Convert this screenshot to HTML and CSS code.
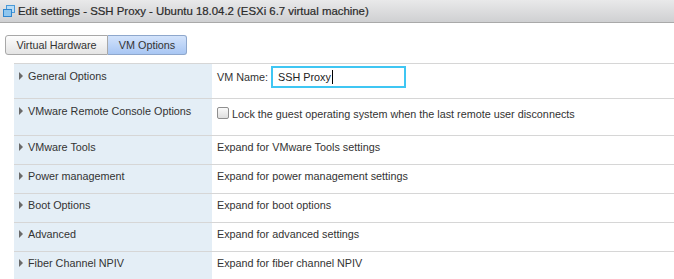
FILE: index.html
```html
<!DOCTYPE html>
<html>
<head>
<meta charset="utf-8">
<link rel="stylesheet" href="styles.css">
</head>
<body>
<div class="titlebar">
  <svg class="ticon" width="14" height="14" viewBox="0 0 14 14">
    <rect x="4.5" y="1.5" width="8" height="7" fill="#b9dcf5" stroke="#4a9ad8"/>
    <rect x="1.5" y="5.5" width="8" height="7" fill="#8fc6ee" stroke="#2f86cf"/>
  </svg>
  <span class="ttext">Edit settings - SSH Proxy - Ubuntu 18.04.2 (ESXi 6.7 virtual machine)</span>
</div>
<div class="tabs">
  <div class="tab">Virtual Hardware</div>
  <div class="tab active">VM Options</div>
</div>
<div class="table">
  <div class="row r-tall">
    <div class="lab"><span class="tri"></span>General Options</div>
    <div class="val">VM Name: <span class="input">SSH Proxy<span class="caret"></span></span></div>
  </div>
  <div class="row r-tall2">
    <div class="lab"><span class="tri"></span>VMware Remote Console Options</div>
    <div class="val chk"><span class="cb"></span>Lock the guest operating system when the last remote user disconnects</div>
  </div>
  <div class="row">
    <div class="lab"><span class="tri"></span>VMware Tools</div>
    <div class="val">Expand for VMware Tools settings</div>
  </div>
  <div class="row">
    <div class="lab"><span class="tri"></span>Power management</div>
    <div class="val">Expand for power management settings</div>
  </div>
  <div class="row">
    <div class="lab"><span class="tri"></span>Boot Options</div>
    <div class="val">Expand for boot options</div>
  </div>
  <div class="row">
    <div class="lab"><span class="tri"></span>Advanced</div>
    <div class="val">Expand for advanced settings</div>
  </div>
  <div class="row">
    <div class="lab"><span class="tri"></span>Fiber Channel NPIV</div>
    <div class="val">Expand for fiber channel NPIV</div>
  </div>
</div>
</body>
</html>
```
FILE: styles.css
```css
* { box-sizing: border-box; }
html, body { margin: 0; padding: 0; background: #fff; overflow: hidden; }
body { font-family: "Liberation Sans", Arial, sans-serif; color: #333; width: 674px; height: 279px; }

.titlebar {
  height: 23px;
  display: flex;
  align-items: center;
  padding-left: 2px;
  background: linear-gradient(#e9e9ea, #cfd0d2);
  border-bottom: 1px solid #a9a9a9;
}
.ticon { margin-right: 2px; }
.ttext { font-size: 11.4px; color: #2a2a2a; -webkit-text-stroke: 0.2px #2a2a2a; }

.tabs {
  display: flex;
  margin: 12px 0 0 5px;
  height: 20px;
}
.tab {
  font-size: 10.8px;
  line-height: 18px;
  border: 1px solid #a8a8a8;
  background: linear-gradient(#fdfdfd, #e4e4e4);
  color: #333;
  white-space: nowrap;
  text-align: center;
}
.tab:first-child { border-radius: 3px 0 0 3px; width: 103px; }
.tab.active {
  border-left: none;
  border-radius: 0 3px 3px 0;
  background: linear-gradient(#d3e3fb, #a8c6f3);
  border-color: #8ea7cc;
  width: 79px;
}

.table {
  margin: 8px 0 0 14px;
  border-top: 1px solid #d6d6d6;
}
.row {
  display: flex;
  height: 29px;
  border-bottom: 1px solid #d6d6d6;
  font-size: 10.8px;
}
.r-tall { height: 35px; }
.r-tall2 { height: 37px; }
.lab {
  width: 198px;
  background: #e4eef6;
  padding: 4px 0 0 5px;
  display: flex;
  align-items: flex-start;
  line-height: 14px;
  white-space: nowrap;
}
.r-tall .lab, .r-tall2 .lab { padding-top: 5px; }
.tri {
  width: 0; height: 0;
  border-top: 4px solid transparent;
  border-bottom: 4px solid transparent;
  border-left: 4px solid #6a6a6a;
  margin: 3px 5px 0 0;
}
.val {
  flex: 1;
  padding: 4px 0 0 5px;
  line-height: 14px;
}
.r-tall .val { padding-top: 2px; display: flex; align-items: center; align-self: flex-start; }
.input {
  display: inline-flex;
  align-items: center;
  margin-left: 3px;
  width: 135px;
  height: 22px;
  border: 2px solid #3fc6f3;
  padding-left: 5px;
  color: #222;
}
.caret { width: 1px; height: 14px; background: #000; margin-left: 1px; }
.chk { display: flex; align-items: flex-start; padding-top: 8px; }
.cb {
  width: 12px; height: 12px;
  border: 1px solid #8f8f8f;
  border-radius: 2px;
  background: linear-gradient(#fafafa, #dedede);
  margin: 0 3px 0 0;
}
```
